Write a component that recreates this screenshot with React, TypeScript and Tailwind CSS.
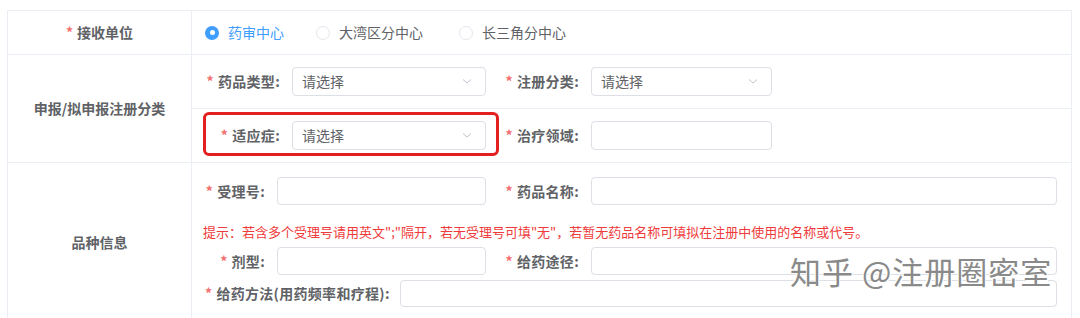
import React from "react";

const font = { fontFamily: '"Noto Sans CJK SC", "Noto Sans", sans-serif' };

function Star() {
  return <span className="mr-[4px] text-[#f56c6c]">*</span>;
}

function Chevron() {
  return (
    <svg width="12" height="12" viewBox="0 0 12 12" className="text-[#c0c4cc]">
      <path d="M2 4.5 L6 8 L10 4.5" fill="none" stroke="currentColor" strokeWidth="1" />
    </svg>
  );
}

function Select({ w }: { w: string }) {
  return (
    <div className={`${w} flex h-[29px] items-center justify-between rounded border border-[#dcdfe6] bg-white pl-[9px] pr-[12px] text-[14px] text-[#606266]`}>
      <span>请选择</span>
      <Chevron />
    </div>
  );
}

function Input({ w, h = "h-[29px]" }: { w: string; h?: string }) {
  return <div className={`${w} ${h} rounded border border-[#dcdfe6] bg-white`} />;
}

function Label({ w, text }: { w: string; text: string }) {
  return (
    <div className={`${w} shrink-0 pr-[12px] text-right text-[14px] font-bold tracking-[0.3px] text-[#606266]`}>
      <Star />
      {text}
    </div>
  );
}

function Radio({ label, checked }: { label: string; checked?: boolean }) {
  return (
    <div className="flex items-center gap-[9px]">
      {checked ? (
        <span className="flex h-[14px] w-[14px] items-center justify-center rounded-full bg-[#409eff]">
          <span className="h-[5px] w-[5px] rounded-full bg-white" />
        </span>
      ) : (
        <span className="h-[14px] w-[14px] rounded-full border border-[#e4e7ed] bg-white" />
      )}
      <span className={`text-[14px] ${checked ? "text-[#409eff]" : "text-[#606266]"}`}>{label}</span>
    </div>
  );
}

export default function App() {
  return (
    <div className="relative h-[318px] w-[1080px] overflow-hidden bg-white pl-[7px] pt-[10px]" style={font}>
      <div className="w-[1065px] border-l border-r border-t border-[#ebeef5]">
        {/* 接收单位 */}
        <div className="flex h-[44px] border-b border-[#ebeef5]">
          <div className="flex w-[184px] shrink-0 items-center justify-center border-r border-[#ebeef5] text-[14px] font-bold text-[#606266]">
            <Star />
            接收单位
          </div>
          <div className="flex items-center pl-[13px]">
            <div className="w-[111px]">
              <Radio label="药审中心" checked />
            </div>
            <div className="w-[143px]">
              <Radio label="大湾区分中心" />
            </div>
            <Radio label="长三角分中心" />
          </div>
        </div>

        {/* 申报/拟申报注册分类 */}
        <div className="flex h-[108px] border-b border-[#ebeef5]">
          <div className="flex w-[184px] shrink-0 items-center justify-center border-r border-[#ebeef5] text-[14px] font-bold text-[#606266]">
            申报/拟申报注册分类
          </div>
          <div className="flex flex-1 flex-col">
            <div className="flex h-[54px] items-center border-b border-[#ebeef5] pl-[11px]">
              <Label w="w-[89px]" text="药品类型:" />
              <Select w="w-[194px]" />
              <div className="ml-[12px]" />
              <Label w="w-[93px]" text="注册分类:" />
              <Select w="w-[181px]" />
            </div>
            <div className="relative flex h-[54px] items-center pl-[11px]">
              <div className="pointer-events-none absolute left-[11px] top-[3px] h-[44px] w-[296px] rounded-[6px] border-[3px] border-[#e3201f]" />
              <Label w="w-[89px]" text="适应症:" />
              <Select w="w-[194px]" />
              <div className="ml-[12px]" />
              <Label w="w-[93px]" text="治疗领域:" />
              <Input w="w-[181px]" />
            </div>
          </div>
        </div>

        {/* 品种信息 */}
        <div className="flex h-[160px]">
          <div className="flex w-[184px] shrink-0 items-center justify-center border-r border-[#ebeef5] pb-[2px] text-[14px] font-bold text-[#606266]">
            品种信息
          </div>
          <div className="flex flex-1 flex-col pl-[11px] pr-[14px] pt-[14px]">
            <div className="flex items-center">
              <Label w="w-[74px]" text="受理号:" />
              <Input w="w-[209px]" h="h-[28px]" />
              <div className="ml-[12px]" />
              <Label w="w-[93px]" text="药品名称:" />
              <Input w="flex-1" h="h-[28px]" />
            </div>
            <div className="mt-[19px] text-[13px] leading-[16px] text-[#ef3b3b]">
              提示：若含多个受理号请用英文";"隔开，若无受理号可填"无"，若暂无药品名称可填拟在注册中使用的名称或代号。
            </div>
            <div className="mt-[7px] flex items-center">
              <Label w="w-[74px]" text="剂型:" />
              <Input w="w-[209px]" h="h-[28px]" />
              <div className="ml-[12px]" />
              <Label w="w-[93px]" text="给药途径:" />
              <Input w="flex-1" h="h-[28px]" />
            </div>
            <div className="mt-[5px] flex items-center">
              <div className="shrink-0 pl-[2px] pr-[10px] text-[14px] font-bold tracking-[0.3px] text-[#606266]">
                <Star />
                给药方法(用药频率和疗程):
              </div>
              <Input w="flex-1" h="h-[27px]" />
            </div>
          </div>
        </div>
      </div>

      {/* watermark */}
      <div
        className="pointer-events-none absolute left-[790px] top-[251px] text-[31px] leading-[40px] tracking-[1px] text-[#8a8a8a]"
        style={{ textShadow: "1px 1px 0 #fff, -1px -1px 0 #fff" }}
      >
        知乎 @注册圈密室
      </div>
    </div>
  );
}
